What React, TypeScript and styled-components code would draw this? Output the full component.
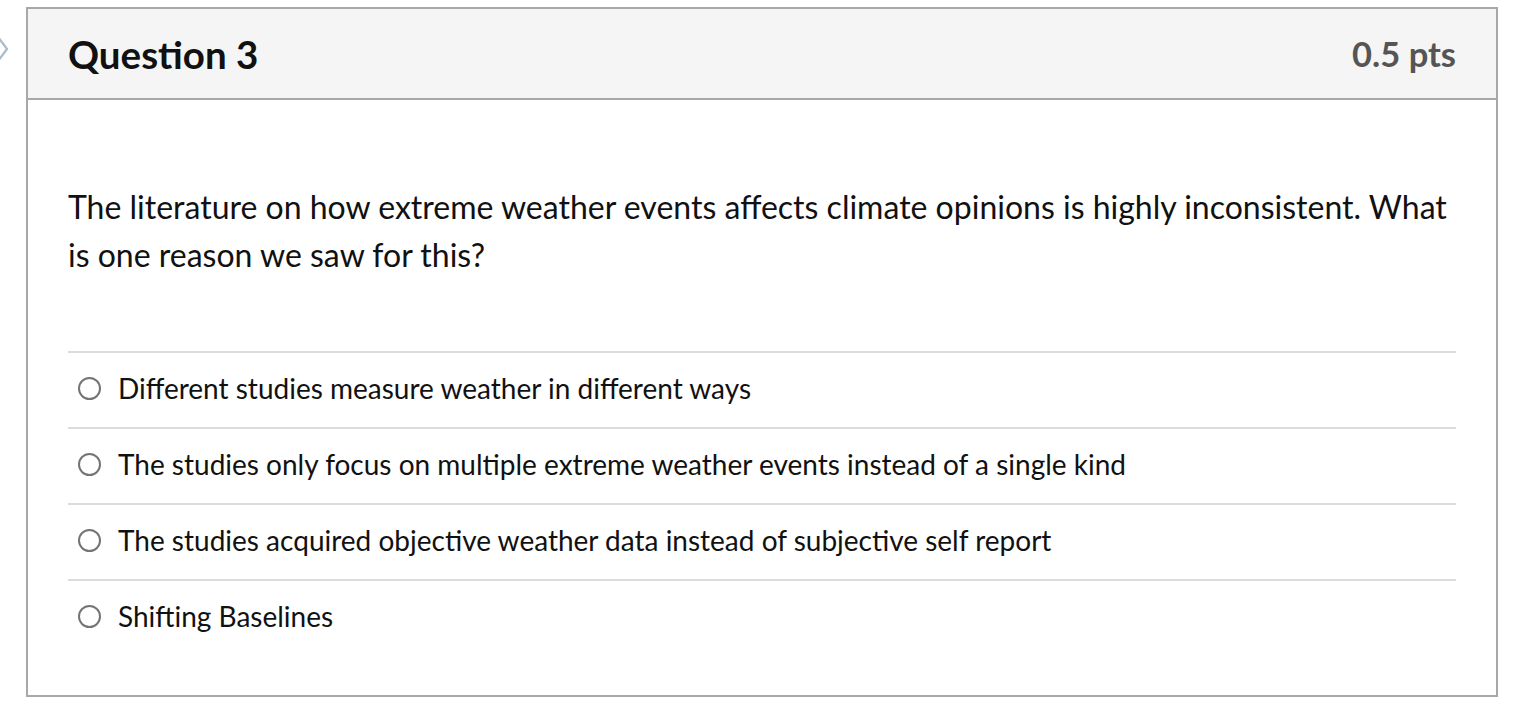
import styled, { createGlobalStyle } from 'styled-components';

const GlobalStyle = createGlobalStyle`
	body {
		margin: 0;
		background: #ffffff;
		font-family: Lato, 'Noto Sans', sans-serif;
		color: #111111;
	}
`;

const Page = styled.div`
	position: relative;
	padding: 7px 30px 0 26px;
	width: 1528px;
	box-sizing: border-box;
`;

const Flag = styled.svg`
	position: absolute;
	left: 0;
	top: 34px;
`;

const Card = styled.div`
	border: 2px solid #a8a8a8;
	width: 1472px;
	height: 690px;
	box-sizing: border-box;
	display: flex;
	flex-direction: column;
`;

const Header = styled.div`
	display: flex;
	align-items: center;
	justify-content: space-between;
	height: 91px;
	padding: 0 40px 0 40px;
	background: #f5f5f5;
	border-bottom: 2px solid #a8a8a8;
	box-sizing: border-box;
	flex-shrink: 0;
`;

const Title = styled.h2`
	margin: 0;
	font-size: 38.5px;
	font-weight: 700;
	color: #111111;
`;

const Points = styled.span`
	font-size: 34.5px;
	font-weight: 700;
	color: #555555;
`;

const Body = styled.div`
	padding: 83px 40px 0 40px;
`;

const QuestionText = styled.p`
	margin: 0 0 72px 0;
	font-size: 32px;
	line-height: 48px;
	color: #111111;
`;

const Answers = styled.div`
	display: flex;
	flex-direction: column;
`;

const Answer = styled.label`
	display: flex;
	align-items: center;
	gap: 17px;
	height: 76px;
	padding: 0 0 4px 10px;
	border-top: 2px solid #dcdcdc;
	box-sizing: border-box;
	font-size: 28px;
	color: #111111;
`;

const Radio = styled.span`
	width: 23px;
	height: 23px;
	border-radius: 50%;
	border: 2px solid #747474;
	box-sizing: border-box;
	flex-shrink: 0;
	background: #ffffff;
`;

const answers = [
	'Different studies measure weather in different ways',
	'The studies only focus on multiple extreme weather events instead of a single kind',
	'The studies acquired objective weather data instead of subjective self report',
	'Shifting Baselines'
];

const App = () => {
	return (
		<>
			<GlobalStyle />
			<Page>
				<Flag width="12" height="30" viewBox="0 0 12 30">
					<polyline
						points="-2,3 7,15 -2,27"
						fill="none"
						stroke="#a9bccc"
						strokeWidth="2.2"
						strokeLinejoin="round"
					/>
				</Flag>
				<Card>
					<Header>
						<Title>Question 3</Title>
						<Points>0.5 pts</Points>
					</Header>
					<Body>
						<QuestionText>
							The literature on how extreme weather events affects climate
							opinions is highly inconsistent. What is one reason we saw for
							this?
						</QuestionText>
						<Answers>
							{answers.map((text) => (
								<Answer key={text}>
									<Radio />
									{text}
								</Answer>
							))}
						</Answers>
					</Body>
				</Card>
			</Page>
		</>
	);
};

export default App;
